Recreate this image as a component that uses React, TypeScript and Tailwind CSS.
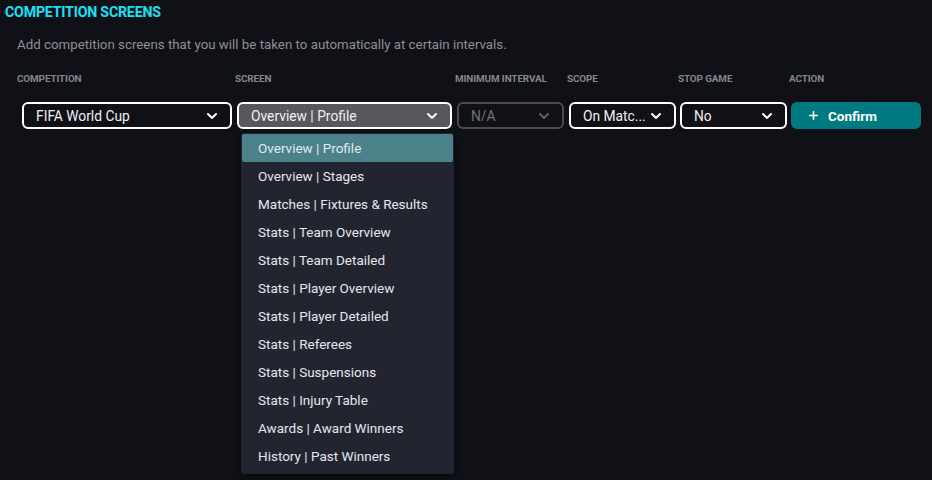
import { ChevronDown, Plus } from "lucide-react";

const SCREENS = [
  "Overview | Profile",
  "Overview | Stages",
  "Matches | Fixtures & Results",
  "Stats | Team Overview",
  "Stats | Team Detailed",
  "Stats | Player Overview",
  "Stats | Player Detailed",
  "Stats | Referees",
  "Stats | Suspensions",
  "Stats | Injury Table",
  "Awards | Award Winners",
  "History | Past Winners",
];

const HEADERS = ["Competition", "Screen", "Minimum Interval", "Scope", "Stop Game", "Action"];

const Select = ({
  value,
  className = "",
  muted = false,
}: {
  value: string;
  className?: string;
  muted?: boolean;
}) => (
  <div
    className={`flex h-[27px] items-center justify-between rounded-[6px] border-2 pl-[12px] pr-[10px] text-[13.8px] leading-[16px] ${
      muted ? "border-[#4a4c52] text-[#6f737c]" : "border-white text-[#eef0f5]"
    } ${className}`}
  >
    <span className="truncate">{value}</span>
    <ChevronDown className={`h-4 w-4 shrink-0 ${muted ? "text-[#5d6068]" : "text-white"}`} strokeWidth={3} />
  </div>
);

const App = () => {
  return (
    <div className="h-[480px] w-[932px] overflow-hidden bg-[#101117] font-['Roboto',sans-serif]">
      <h1 className="pl-[5px] pt-[4px] text-[14.2px] font-bold uppercase leading-[16px] tracking-[-0.2px] text-[#1de0f5]">
        Competition Screens
      </h1>
      <p className="mt-[17px] pl-[17px] text-[13.3px] leading-[16px] text-[#8d9098]">
        Add competition screens that you will be taken to automatically at certain intervals.
      </p>

      <div className="mt-[20px] grid grid-cols-[218px_220px_112px_111px_111px_140px] pl-[17px]">
        {HEADERS.map(h => (
          <span key={h} className="text-[9.9px] font-bold uppercase leading-[12px] tracking-[-0.1px] text-[#85878e]">
            {h}
          </span>
        ))}

        <div className="col-span-6 h-[17px]" />

        <Select value="FIFA World Cup" className="ml-[5px] w-[210px] bg-[#101117]" />
        <div className="relative ml-[2px] w-[215px]">
          <Select value="Overview | Profile" className="bg-[#58575d]" />
          <ul className="absolute left-[4px] top-[31px] z-10 w-[213px] rounded-[3px] bg-[#22252f] px-[1px] pb-[4px] pt-[1px] shadow-[0_2px_6px_rgba(0,0,0,0.6)]">
            {SCREENS.map((s, i) => (
              <li
                key={s}
                className={`flex h-[28px] items-center rounded-[2px] pl-[16px] text-[13.5px] text-[#e4e7ef] ${
                  i === 0 ? "bg-[#4b8189]" : ""
                }`}
              >
                {s}
              </li>
            ))}
          </ul>
        </div>
        <Select value="N/A" muted className="ml-[2px] w-[107px] bg-[#101117]" />
        <Select value="On Matc..." className="ml-[2px] w-[107px] bg-[#101117]" />
        <Select value="No" className="ml-[2px] w-[107px] bg-[#101117]" />
        <button className="ml-[2px] flex h-[27px] w-[130px] items-center gap-[8px] rounded-[6px] bg-[#007a80] pl-[16px] text-[13.5px] font-bold leading-[16px] text-white">
          <Plus className="h-[13px] w-[13px]" strokeWidth={3} />
          Confirm
        </button>
      </div>
    </div>
  );
};

export default App;
